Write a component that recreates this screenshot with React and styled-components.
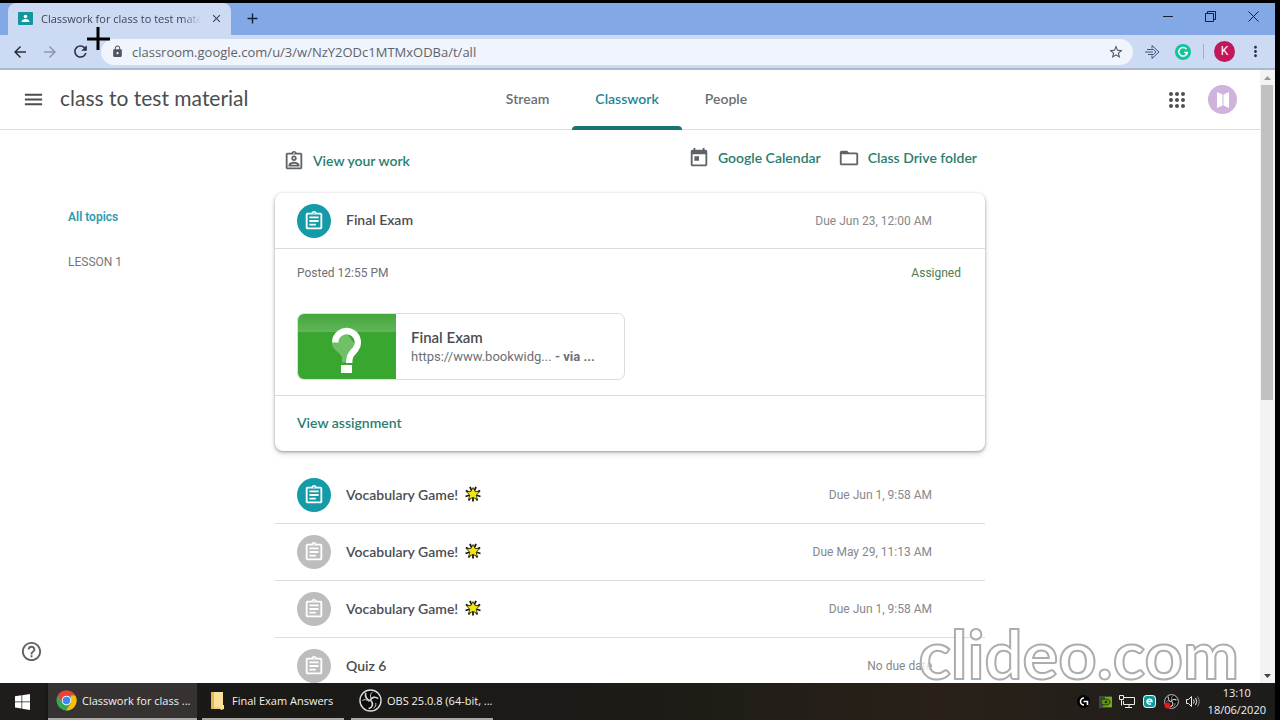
import styled, { createGlobalStyle } from "styled-components";
import {
  MdAdd,
  MdArrowBack,
  MdArrowForward,
  MdClose,
  MdFolderOpen,
  MdHelpOutline,
  MdLock,
  MdMenu,
  MdMoreVert,
  MdOutlineAssignment,
  MdOutlineAssignmentInd,
  MdRefresh,
  MdStarBorder,
  MdToday,
} from "react-icons/md";

const GlobalStyle = createGlobalStyle`
  * {
    box-sizing: border-box;
    margin: 0;
    padding: 0;
  }

  body {
    background: #000;
    overflow: hidden;
  }

  button,
  input {
    border: none;
    background: none;
    font: inherit;
    color: inherit;
  }

  a {
    color: inherit;
    text-decoration: none;
  }

  ul {
    list-style: none;
  }

  svg {
    display: block;
    flex-shrink: 0;
  }
`;

const google = `Lato, "Open Sans", sans-serif`;
const roboto = `Roboto, "Liberation Sans", sans-serif`;
const system = `"Open Sans", "Noto Sans", sans-serif`;

/* ---------- Desktop and browser ---------- */

const Desktop = styled.div`
  position: relative;
  display: flex;
  flex-direction: column;
  height: 100vh;
  padding: 3px 5px 0 0;
  background: #000;
  font-family: ${roboto};
`;

const TitleBar = styled.div`
  display: flex;
  height: 32px;
  padding-left: 8px;
  background: #82a9e6;
  color: #16202f;
`;

const BrowserTab = styled.div`
  display: flex;
  align-items: center;
  gap: 8px;
  width: 223px;
  padding: 0 8px 2px 10px;
  border-radius: 8px 8px 0 0;
  background: #cddaf4;
  font-family: ${system};
  font-size: 11px;
  color: #3c4654;
`;

const TabTitle = styled.span`
  flex: 1;
  overflow: hidden;
  white-space: nowrap;
  mask-image: linear-gradient(to right, #000 88%, transparent);
`;

const IconButton = styled.button`
  display: grid;
  place-items: center;
  flex-shrink: 0;
  width: ${(props) => props.$size || 30}px;
  height: ${(props) => props.$size || 30}px;
  color: ${(props) => props.$color || "inherit"};
`;

const NewTab = styled(IconButton)`
  margin-left: 6px;
`;

const WindowControls = styled.div`
  display: flex;
  margin-left: auto;
`;

const WindowButton = styled.button`
  display: grid;
  place-items: center;
  width: 43px;
  height: 26px;
`;

const Toolbar = styled.div`
  display: flex;
  align-items: center;
  height: 35px;
  padding: 0 5px;
  background: #cddaf4;
  border-bottom: 2px solid #a9b8d4;
  color: #27303d;
`;

const AddressBar = styled.div`
  display: flex;
  align-items: center;
  flex: 1;
  gap: 8px;
  height: 26px;
  margin: 0 5px 0 6px;
  padding: 0 2px 0 10px;
  border-radius: 13px;
  background: #f0f4fc;
  color: #50565f;
`;

const Address = styled.input`
  flex: 1;
  min-width: 0;
  font-family: ${system};
  font-size: 13px;
  line-height: 20px;
  color: #5f6368;
  outline: none;
`;

const Divider = styled.span`
  width: 1px;
  height: 15px;
  margin: 0 5px;
  background: #9fb0cf;
`;

const Profile = styled.button`
  width: 21px;
  height: 21px;
  margin: 0 5px;
  border-radius: 50%;
  background: #c2185b;
  color: #fff;
  font-size: 12px;
  line-height: 21px;
`;

const Viewport = styled.div`
  display: flex;
  flex: 1;
  min-height: 0;
  background: #fff;
`;

const Page = styled.div`
  position: relative;
  flex: 1;
  min-width: 0;
  overflow: hidden;
`;

const Scrollbar = styled.div`
  display: flex;
  flex-direction: column;
  width: 15px;
  padding: 0 2px 0 1px;
  background: #f3f3f3;
`;

const ScrollArrow = styled.span`
  display: grid;
  place-items: center;
  height: 15px;
  color: ${(props) => props.$color};
`;

const ScrollTrack = styled.div`
  flex: 1;
`;

const ScrollThumb = styled.div`
  height: 54%;
  background: #c1c1c1;
`;

/* ---------- Classroom ---------- */

const Header = styled.header`
  display: grid;
  grid-template-columns: 1fr auto 1fr;
  height: 60px;
  padding: 0 23px 0 16px;
  border-bottom: 1px solid #dadce0;
  color: #4a4d51;
`;

const HeaderSide = styled.div`
  display: flex;
  align-items: center;
  gap: 10px;
`;

const HeaderRight = styled(HeaderSide)`
  justify-content: flex-end;
  gap: 14px;
`;

const ClassName = styled.h1`
  padding-bottom: 4px;
  font-family: ${google};
  font-size: 21px;
  font-weight: 400;
  line-height: 28px;
  white-space: nowrap;
`;

const Tabs = styled.nav`
  display: flex;
`;

const TabLink = styled.a`
  position: relative;
  display: flex;
  align-items: center;
  padding: 0 23px 3px;
  font-family: ${google};
  font-size: 14px;
  font-weight: 600;
  color: ${(props) => (props.$active ? "#1f8592" : "#6b6e72")};

  &::after {
    content: "";
    position: absolute;
    inset: auto 0 -1px;
    height: 4px;
    border-radius: 4px 4px 0 0;
    background: ${(props) => (props.$active ? "#17736f" : "transparent")};
  }
`;

const Columns = styled.div`
  display: grid;
  grid-template-columns: 1fr minmax(0, 710px) 1fr;
`;

const Topics = styled.nav`
  display: flex;
  flex-direction: column;
  padding: 65px 0 0 68px;
`;

const Topic = styled.a`
  font-size: 12px;
  font-weight: ${(props) => (props.$active ? 600 : 400)};
  line-height: 45px;
  color: ${(props) => (props.$active ? "#2e9ab0" : "#777")};
`;

const Actions = styled.div`
  display: flex;
  align-items: center;
  justify-content: space-between;
  height: 63px;
  padding: 0 8px;
`;

const ActionGroup = styled.div`
  display: flex;
  gap: 17px;
  padding-bottom: 6px;
`;

const Action = styled.a`
  display: flex;
  align-items: center;
  gap: 8px;
  padding-bottom: 2px;
  font-family: ${google};
  font-size: 14px;
  font-weight: 600;
  color: #2a7d6f;

  svg {
    color: #5f6368;
  }
`;

const Card = styled.article`
  margin-bottom: 16px;
  border-radius: 8px;
  box-shadow: 0 1px 3px rgba(0, 0, 0, 0.35), 0 3px 6px rgba(0, 0, 0, 0.12);
`;

const Row = styled.div`
  display: flex;
  align-items: center;
  gap: 15px;
  height: ${(props) => props.$height || 57}px;
  padding: 0 53px 0 22px;
  border-bottom: 1px solid #dadce0;
`;

const Badge = styled.span`
  display: grid;
  place-items: center;
  width: 34px;
  height: 34px;
  border-radius: 50%;
  background: ${(props) => (props.$done ? "#bdbdbd" : "#159aa8")};
  color: #fff;
`;

const RowTitle = styled.h2`
  display: flex;
  align-items: center;
  gap: 7px;
  flex: 1;
  padding-bottom: 2px;
  font-family: ${google};
  font-size: 14px;
  font-weight: 600;
  color: #4a4d51;
`;

const Due = styled.span`
  font-size: 12px;
  color: #85888c;
`;

const CardBody = styled.div`
  padding: 14px 24px 15px 22px;
  border-bottom: 1px solid #dadce0;
`;

const Meta = styled.div`
  display: flex;
  justify-content: space-between;
  margin-bottom: 30px;
  font-size: 12px;
  line-height: 20px;
  color: #6d7074;
`;

const Status = styled.span`
  color: #4e7d4b;
`;

const Attachment = styled.a`
  display: flex;
  align-items: center;
  width: 328px;
  max-width: 100%;
  height: 67px;
  border: 1px solid #dadce0;
  border-radius: 7px;
  overflow: hidden;
`;

const Thumb = styled.div`
  display: grid;
  place-items: center;
  flex-shrink: 0;
  width: 98px;
  height: 65px;
  padding-top: 8px;
  background: linear-gradient(#45a93e 0 2px, #62b55b 18px, #38a62f 18px);
`;

const AttachmentText = styled.div`
  padding-left: 15px;
  white-space: nowrap;
`;

const AttachmentTitle = styled.h3`
  font-family: ${google};
  font-size: 15px;
  font-weight: 600;
  line-height: 20px;
  color: #4a4d51;
`;

const AttachmentUrl = styled.p`
  font-size: 13px;
  line-height: 20px;
  color: #6d7074;
`;

const CardFooter = styled.div`
  display: flex;
  height: 55px;
  padding: 0 22px;
`;

const Help = styled(IconButton)`
  position: absolute;
  left: 16px;
  bottom: 17px;
  color: #5f6368;
`;

const Avatar = styled.button`
  display: grid;
  place-items: center;
  width: 29px;
  height: 29px;
  border-radius: 50%;
  background: #ceb3dc;
`;

/* ---------- Taskbar ---------- */

const TaskbarRoot = styled.footer`
  display: flex;
  height: 37px;
  background: linear-gradient(to right, #191817, #1d1b16 50%, #292119 75%, #1c1c1b);
  color: #f1f1f1;
  font-family: ${system};
  font-size: 12px;
`;

const Start = styled.button`
  display: grid;
  place-items: center;
  width: 45px;
  background: #211c1c;
`;

const Task = styled.button`
  display: flex;
  align-items: center;
  gap: 5px;
  width: ${(props) => props.$width}px;
  margin-left: ${(props) => props.$gap}px;
  padding-left: 8px;
  border-bottom: 2px solid #aaa7a5;
  background: ${(props) => (props.$active ? "#353231" : "transparent")};
  font-size: 11px;
  white-space: nowrap;
`;

const Tray = styled.div`
  display: flex;
  align-items: center;
  gap: 5px;
  margin-left: auto;
  padding-right: 4px;
`;

const TrayButton = styled.button`
  display: grid;
  place-items: center;
  width: 17px;
  height: 22px;
`;

const Clock = styled.time`
  margin: 0 5px 2px 1px;
  line-height: 17px;
  font-size: 11px;
  text-align: center;
`;

/* ---------- Overlays ---------- */

const Cursor = styled.svg`
  position: absolute;
  left: 86px;
  top: 26px;
`;

const Watermark = styled.div`
  position: absolute;
  right: 41px;
  bottom: 27px;
  font-family: Lato, sans-serif;
  font-size: 67px;
  font-weight: 700;
  line-height: 80px;
  color: rgba(255, 255, 255, 0.8);
  -webkit-text-stroke: 2px #adadad;
  pointer-events: none;
`;

/* ---------- Drawings ---------- */

function Obs({ size }) {
  return (
    <svg width={size} height={size} viewBox="0 0 24 24" fill="none">
      <circle cx="12" cy="12" r="11" fill="#0b0b0b" stroke="#ddd" strokeWidth="1.4" />
      <g stroke="#d6d6d6" strokeWidth="1.7">
        <path d="M7 4c-1 4 1 7 5 8.500" />
        <path d="M20 10c-3-2.500-7-1.500-8.500 2" />
        <path d="M10 20.500c4-1 5.500-5 2.500-8.500" />
        <path d="M3.500 12c2-1.500 5-1 7 1M15 20c2-1 3-3 2.500-5.500M14 3.500c-2 1-2.500 3-1.500 6" strokeWidth="1" />
      </g>
    </svg>
  );
}

function Chrome() {
  return (
    <svg width="21" height="21" viewBox="0 0 48 48">
      <circle cx="24" cy="24" r="23" fill="#34a853" />
      <path d="M4 12.500A23 23 0 0 1 44 12.500H24l-10 17z" fill="#ea4335" />
      <path d="M44 12.500A23 23 0 0 1 23 47l11-17.500V12.500z" fill="#fbbc05" />
      <circle cx="24" cy="24" r="11" fill="#f1f1f1" />
      <circle cx="24" cy="24" r="8.500" fill="#4285f4" />
    </svg>
  );
}

function Sparkle() {
  return (
    <svg width="16" height="16" viewBox="0 0 16 16">
      <path
        d="M8 8L5 .8M8 8l3-7.200M8 8L.8 4.500M8 8l7.200-3.500M8 8L.5 10.500M8 8l7.500 2.500M8 8l-4.500 6.500M8 8l4.500 6.500M8 8v7.500"
        stroke="#15180c"
        strokeWidth="1.8"
      />
      <path
        d="M8 1.500l2 4 4.500.4-3.300 3.100 1.100 4.500L8 11.300l-4.300 2.200L4.800 9 1.500 5.900 6 5.500z"
        fill="#f4e411"
        stroke="#2c2f0c"
        strokeWidth="0.8"
      />
    </svg>
  );
}

function QuestionMark() {
  return (
    <svg width="34" height="48" viewBox="0 0 34 48">
      <path d="M2 15.500c0 8 8 9 10 15v5h7l6-18L16 5z" fill="#6fc067" />
      <path
        d="M5.200 15.500a11.300 11.300 0 1 1 20.500 6.500c-3.500 4.500-6.500 5.500-6.500 14"
        fill="none"
        stroke="#fff"
        strokeWidth="6.400"
      />
      <path d="M11 38h11v8H11z" fill="#fff" />
    </svg>
  );
}

function Apps() {
  const spots = [3, 9, 15];
  return (
    <svg width="18" height="18" viewBox="0 0 18 18" fill="#4d5054">
      {spots.map((y) => spots.map((x) => <circle key={`${x}-${y}`} cx={x} cy={y} r="2" />))}
    </svg>
  );
}

/* ---------- Parts ---------- */

const assignments = [
  { id: 1, title: "Vocabulary Game!", due: "Due Jun 1, 9:58 AM", sparkle: true },
  { id: 2, title: "Vocabulary Game!", due: "Due May 29, 11:13 AM", sparkle: true, done: true },
  { id: 3, title: "Vocabulary Game!", due: "Due Jun 1, 9:58 AM", sparkle: true, done: true },
  { id: 4, title: "Quiz 6", due: "No due date", done: true },
];

function AssignmentRow({ assignment, height }) {
  return (
    <Row $height={height}>
      <Badge $done={assignment.done}>
        <MdOutlineAssignment size={22} />
      </Badge>
      <RowTitle>
        {assignment.title}
        {assignment.sparkle && <Sparkle />}
      </RowTitle>
      <Due>{assignment.due}</Due>
    </Row>
  );
}

function BrowserChrome() {
  return (
    <>
      <TitleBar>
        <BrowserTab>
          <svg width="15" height="13" viewBox="0 0 15 13">
            <rect width="15" height="13" rx="1" fill="#12959c" />
            <circle cx="7.500" cy="4.500" r="1.800" fill="#fff" />
            <path d="M3.500 10c0-4 8-4 8 0z" fill="#fff" />
          </svg>
          <TabTitle>Classwork for class to test material</TabTitle>
          <IconButton $size={14} aria-label="Close tab">
            <MdClose size={13} />
          </IconButton>
        </BrowserTab>
        <NewTab aria-label="New tab">
          <MdAdd size={17} />
        </NewTab>
        <WindowControls>
          <WindowButton aria-label="Minimize">
            <svg width="10" height="10" stroke="currentColor">
              <path d="M0 5.500h10" />
            </svg>
          </WindowButton>
          <WindowButton aria-label="Restore">
            <svg width="11" height="11" fill="none" stroke="currentColor">
              <path d="M.5 2.500h8v8h-8zM2.500 2.500v-2h8v8h-2" />
            </svg>
          </WindowButton>
          <WindowButton aria-label="Close">
            <svg width="11" height="11" stroke="currentColor">
              <path d="M.5.5l10 10M10.500.5l-10 10" />
            </svg>
          </WindowButton>
        </WindowControls>
      </TitleBar>

      <Toolbar>
        <IconButton aria-label="Back">
          <MdArrowBack size={18} />
        </IconButton>
        <IconButton aria-label="Forward" $color="#8b98ae">
          <MdArrowForward size={18} />
        </IconButton>
        <IconButton aria-label="Reload">
          <MdRefresh size={19} />
        </IconButton>
        <AddressBar>
          <MdLock size={13} />
          <Address
            aria-label="Address"
            defaultValue="classroom.google.com/u/3/w/NzY2ODc1MTMxODBa/t/all"
          />
          <IconButton aria-label="Bookmark">
            <MdStarBorder size={16} />
          </IconButton>
        </AddressBar>
        <IconButton aria-label="Send to device" $color="#3f557c">
          <svg width="16" height="16" viewBox="0 0 16 16" fill="none" stroke="currentColor">
            <path d="M7 4.500V1.500L14 8l-7 6.500v-3M2 5.500h6.500L11 8l-2.500 2.500H3M0 8h8" />
          </svg>
        </IconButton>
        <IconButton aria-label="Grammar checker">
          <svg width="16" height="16" viewBox="0 0 16 16">
            <circle cx="8" cy="8" r="8" fill="#15c39a" />
            <path d="M11.500 5.200A4.300 4.300 0 1 0 12.300 8.500H9.200M11.600 8.500v2.500" fill="none" stroke="#fff" strokeWidth="1.500" />
          </svg>
        </IconButton>
        <Divider />
        <Profile>K</Profile>
        <IconButton aria-label="Menu">
          <MdMoreVert size={17} />
        </IconButton>
      </Toolbar>
    </>
  );
}

function Classroom() {
  return (
    <Page>
      <Header>
        <HeaderSide>
          <IconButton $size={34} aria-label="Main menu">
            <MdMenu size={23} />
          </IconButton>
          <ClassName>class to test material</ClassName>
        </HeaderSide>
        <Tabs>
          <TabLink href="#stream">Stream</TabLink>
          <TabLink href="#classwork" $active>
            Classwork
          </TabLink>
          <TabLink href="#people">People</TabLink>
        </Tabs>
        <HeaderRight>
          <IconButton $size={34} aria-label="Apps">
            <Apps />
          </IconButton>
          <Avatar aria-label="Account">
            <svg width="12" height="17" viewBox="0 0 12 17" fill="#fff">
              <path d="M0 1l5.500 2.500v11L0 17zM12 1L6.500 3.500v11L12 17z" />
            </svg>
          </Avatar>
        </HeaderRight>
      </Header>

      <Columns>
        <Topics>
          <Topic href="#all" $active>
            All topics
          </Topic>
          <Topic href="#lesson-1">LESSON 1</Topic>
        </Topics>

        <main>
          <Actions>
            <Action href="#work">
              <MdOutlineAssignmentInd size={22} />
              View your work
            </Action>
            <ActionGroup>
              <Action href="#calendar">
                <MdToday size={22} />
                Google Calendar
              </Action>
              <Action href="#drive">
                <MdFolderOpen size={22} />
                Class Drive folder
              </Action>
            </ActionGroup>
          </Actions>

          <Card>
            <AssignmentRow
              assignment={{ title: "Final Exam", due: "Due Jun 23, 12:00 AM" }}
              height={56}
            />
            <CardBody>
              <Meta>
                <span>Posted 12:55 PM</span>
                <Status>Assigned</Status>
              </Meta>
              <Attachment href="#attachment">
                <Thumb>
                  <QuestionMark />
                </Thumb>
                <AttachmentText>
                  <AttachmentTitle>Final Exam</AttachmentTitle>
                  <AttachmentUrl>
                    https://www.bookwidg... <b>- via ...</b>
                  </AttachmentUrl>
                </AttachmentText>
              </Attachment>
            </CardBody>
            <CardFooter>
              <Action href="#assignment">View assignment</Action>
            </CardFooter>
          </Card>

          <ul>
            {assignments.map((assignment) => (
              <li key={assignment.id}>
                <AssignmentRow assignment={assignment} />
              </li>
            ))}
          </ul>
        </main>
      </Columns>

      <Help aria-label="Help">
        <MdHelpOutline size={23} />
      </Help>
    </Page>
  );
}

function Taskbar() {
  return (
    <TaskbarRoot>
      <Start aria-label="Start">
        <svg width="15" height="16" viewBox="0 0 15 16" fill="#fff">
          <path d="M0 2.200l6.500-.9v6.200H0zM7.200 1.200L15 0v7.500H7.200zM0 8.300h6.500v6.200L0 13.600zM7.200 8.300H15V16l-7.800-1.200z" />
        </svg>
      </Start>
      <Task $width={149} $gap={3} $active>
        <Chrome />
        Classwork for class ...
      </Task>
      <Task $width={142} $gap={5}>
        <svg width="17" height="20" viewBox="0 0 17 20">
          <path d="M1 1h9v17H1z" fill="#f5cf6d" />
          <path d="M4 1h9v13h1v4l-3 1-2-3H4z" fill="#fbe09a" />
          <path d="M1 1h3v17H1z" fill="#e6b84f" />
        </svg>
        Final Exam Answers
      </Task>
      <Task $width={142} $gap={7}>
        <Obs size={23} />
        OBS 25.0.8 (64-bit, ...
      </Task>
      <Tray>
        <TrayButton aria-label="Logitech G Hub">
          <svg width="13" height="13" viewBox="0 0 13 13" fill="none">
            <circle cx="6.500" cy="6.500" r="6.500" fill="#000" />
            <path d="M7 3a3.500 3.500 0 1 0 0 7M6.500 6.500h4V10" stroke="#fff" strokeWidth="1.600" />
          </svg>
        </TrayButton>
        <TrayButton aria-label="Nvidia settings">
          <svg width="13" height="12" viewBox="0 0 13 12" fill="none">
            <rect width="13" height="12" fill="#3d4b3c" />
            <path d="M6 1h7v10H4z" fill="#6fae14" />
            <ellipse cx="6.500" cy="6" rx="4.500" ry="3" fill="#5d9410" stroke="#243414" />
            <circle cx="7" cy="6" r="1.300" fill="#243414" />
          </svg>
        </TrayButton>
        <TrayButton aria-label="Network">
          <svg width="16" height="14" viewBox="0 0 16 14" fill="none" stroke="#eee">
            <path d="M5 2.500h10.500v7H4.500V6M10 9.500v3M6 12.500h7M.5.500h4v4h-4zM2.500 4.500v6" />
          </svg>
        </TrayButton>
        <TrayButton aria-label="Eset">
          <svg width="13" height="13" viewBox="0 0 13 13" fill="none">
            <rect width="13" height="13" rx="4" fill="#d9f7f8" />
            <rect x="1" y="1" width="11" height="11" rx="3" fill="#10979e" />
            <path d="M4 6.500h5a2.500 2.500 0 1 0-1 2.200" stroke="#fff" strokeWidth="1.500" />
          </svg>
        </TrayButton>
        <TrayButton aria-label="OBS recording">
          <svg width="15" height="15" viewBox="0 0 15 15">
            <Obs size={15} />
            <circle cx="3.500" cy="11.500" r="3" fill="#f01414" />
          </svg>
        </TrayButton>
        <TrayButton aria-label="Volume">
          <svg width="15" height="13" viewBox="0 0 15 13" fill="none" stroke="#eee">
            <path d="M.5 4.500h2l3-3v10l-3-3h-2zM7.500 4.500q1.500 2 0 4M9.500 3q2.500 3.500 0 7" />
            <path d="M11.500 1.500q3.500 5 0 10" stroke="#888" />
          </svg>
        </TrayButton>
        <Clock>
          13:10
          <br />
          18/06/2020
        </Clock>
      </Tray>
    </TaskbarRoot>
  );
}

export default function App() {
  return (
    <>
      <GlobalStyle />
      <Desktop>
        <BrowserChrome />
        <Viewport>
          <Classroom />
          <Scrollbar>
            <ScrollArrow $color="#999">
              <svg width="7" height="4" fill="currentColor">
                <path d="M0 4h7L3.500 0z" />
              </svg>
            </ScrollArrow>
            <ScrollTrack>
              <ScrollThumb />
            </ScrollTrack>
            <ScrollArrow $color="#444">
              <svg width="7" height="4" fill="currentColor">
                <path d="M0 0h7L3.500 4z" />
              </svg>
            </ScrollArrow>
          </Scrollbar>
        </Viewport>
        <Taskbar />
        <Watermark>clideo.com</Watermark>
        <Cursor width="24" height="24" stroke="#000" strokeWidth="3">
          <path d="M12 1v23M1 13h23" />
        </Cursor>
      </Desktop>
    </>
  );
}
